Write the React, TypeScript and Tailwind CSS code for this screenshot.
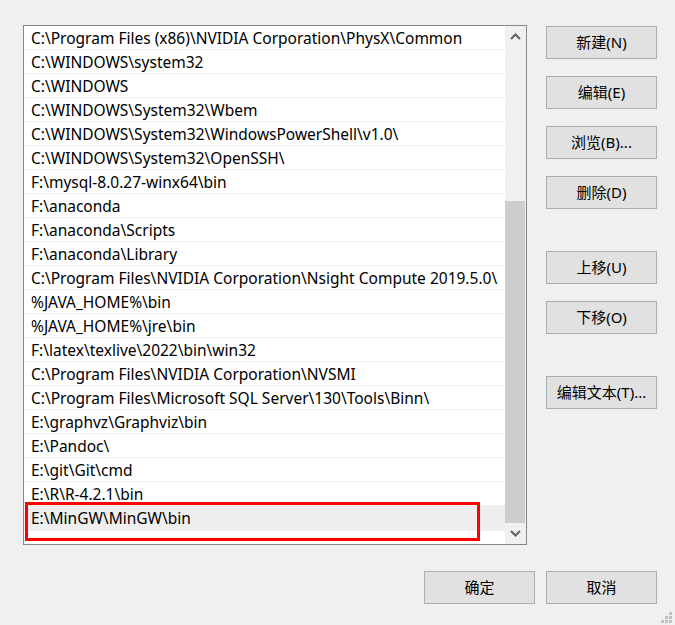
import React from "react";

const paths = [
  "C:\\Program Files (x86)\\NVIDIA Corporation\\PhysX\\Common",
  "C:\\WINDOWS\\system32",
  "C:\\WINDOWS",
  "C:\\WINDOWS\\System32\\Wbem",
  "C:\\WINDOWS\\System32\\WindowsPowerShell\\v1.0\\",
  "C:\\WINDOWS\\System32\\OpenSSH\\",
  "F:\\mysql-8.0.27-winx64\\bin",
  "F:\\anaconda",
  "F:\\anaconda\\Scripts",
  "F:\\anaconda\\Library",
  "C:\\Program Files\\NVIDIA Corporation\\Nsight Compute 2019.5.0\\",
  "%JAVA_HOME%\\bin",
  "%JAVA_HOME%\\jre\\bin",
  "F:\\latex\\texlive\\2022\\bin\\win32",
  "C:\\Program Files\\NVIDIA Corporation\\NVSMI",
  "C:\\Program Files\\Microsoft SQL Server\\130\\Tools\\Binn\\",
  "E:\\graphvz\\Graphviz\\bin",
  "E:\\Pandoc\\",
  "E:\\git\\Git\\cmd",
  "E:\\R\\R-4.2.1\\bin",
  "E:\\MinGW\\MinGW\\bin",
];

function Btn({ label, className = "" }: { label: string; className?: string }) {
  return (
    <button
      className={
        "w-[111px] h-[33px] bg-[#e1e1e1] border border-[#adadad] text-[15px] text-black flex items-center justify-center " +
        className
      }
    >
      {label}
    </button>
  );
}

export default function App() {
  const font = { fontFamily: '"Noto Sans", "Noto Sans CJK SC", sans-serif' };
  return (
    <div
      className="w-[675px] h-[625px] bg-[#f0f0f0] relative overflow-hidden"
      style={font}
    >
      <div className="flex pt-[25px] pl-[23px]">
        {/* list box */}
        <div className="relative w-[504px] h-[520px] border border-[#828790] bg-white flex">
          <div className="w-[481px] flex flex-col overflow-hidden">
            {paths.map((p, i) => {
              const sel = i === paths.length - 1;
              return (
                <div
                  key={i}
                  className={
                    "h-[24px] shrink-0 pl-[7px] pt-[2px] text-[15.5px] leading-[21px] text-[#000000] whitespace-nowrap overflow-hidden " +
                    (sel ? "bg-[#efefef] h-[25px]" : "border-b border-[#f0f0f0]")
                  }
                >
                  {p}
                </div>
              );
            })}
          </div>
          {/* scrollbar */}
          <div className="w-[21px] bg-[#f0f0f0] flex flex-col">
            <div className="h-[21px] flex items-center justify-center">
              <svg width="11" height="7" viewBox="0 0 11 7">
                <path d="M1 6 L5.5 1.5 L10 6" fill="none" stroke="#606060" strokeWidth="2" />
              </svg>
            </div>
            <div className="flex-1 flex flex-col">
              <div className="h-[154px]" />
              <div className="flex-1 bg-[#cdcdcd] mr-[1px]" />
            </div>
            <div className="h-[21px] flex items-center justify-center">
              <svg width="11" height="7" viewBox="0 0 11 7">
                <path d="M1 1 L5.5 5.5 L10 1" fill="none" stroke="#606060" strokeWidth="2" />
              </svg>
            </div>
          </div>
          {/* red highlight */}
          <div className="absolute left-[1px] top-[476px] w-[455px] h-[39px] border-[3px] border-[#ff0000]" />
        </div>
        {/* right buttons */}
        <div className="flex flex-col ml-[19px] pt-[1px]">
          <Btn label="新建(N)" />
          <Btn label="编辑(E)" className="mt-[17px]" />
          <Btn label="浏览(B)..." className="mt-[17px]" />
          <Btn label="删除(D)" className="mt-[17px]" />
          <Btn label="上移(U)" className="mt-[42px]" />
          <Btn label="下移(O)" className="mt-[17px]" />
          <Btn label="编辑文本(T)..." className="mt-[42px]" />
        </div>
      </div>
      <div className="flex justify-end gap-[11px] pr-[18px] mt-[26px]">
        <Btn label="确定" />
        <Btn label="取消" />
      </div>
      {/* resize grip */}
      <svg className="absolute right-0 bottom-0" width="16" height="14" viewBox="0 0 16 14">
        <rect x="10" y="1" width="3" height="3" fill="#c2c2c2" />
        <rect x="6" y="5" width="3" height="3" fill="#c2c2c2" />
        <rect x="10" y="5" width="3" height="3" fill="#c2c2c2" />
        <rect x="2" y="9" width="3" height="3" fill="#c2c2c2" />
        <rect x="6" y="9" width="3" height="3" fill="#c2c2c2" />
        <rect x="10" y="9" width="3" height="3" fill="#c2c2c2" />
      </svg>
    </div>
  );
}
